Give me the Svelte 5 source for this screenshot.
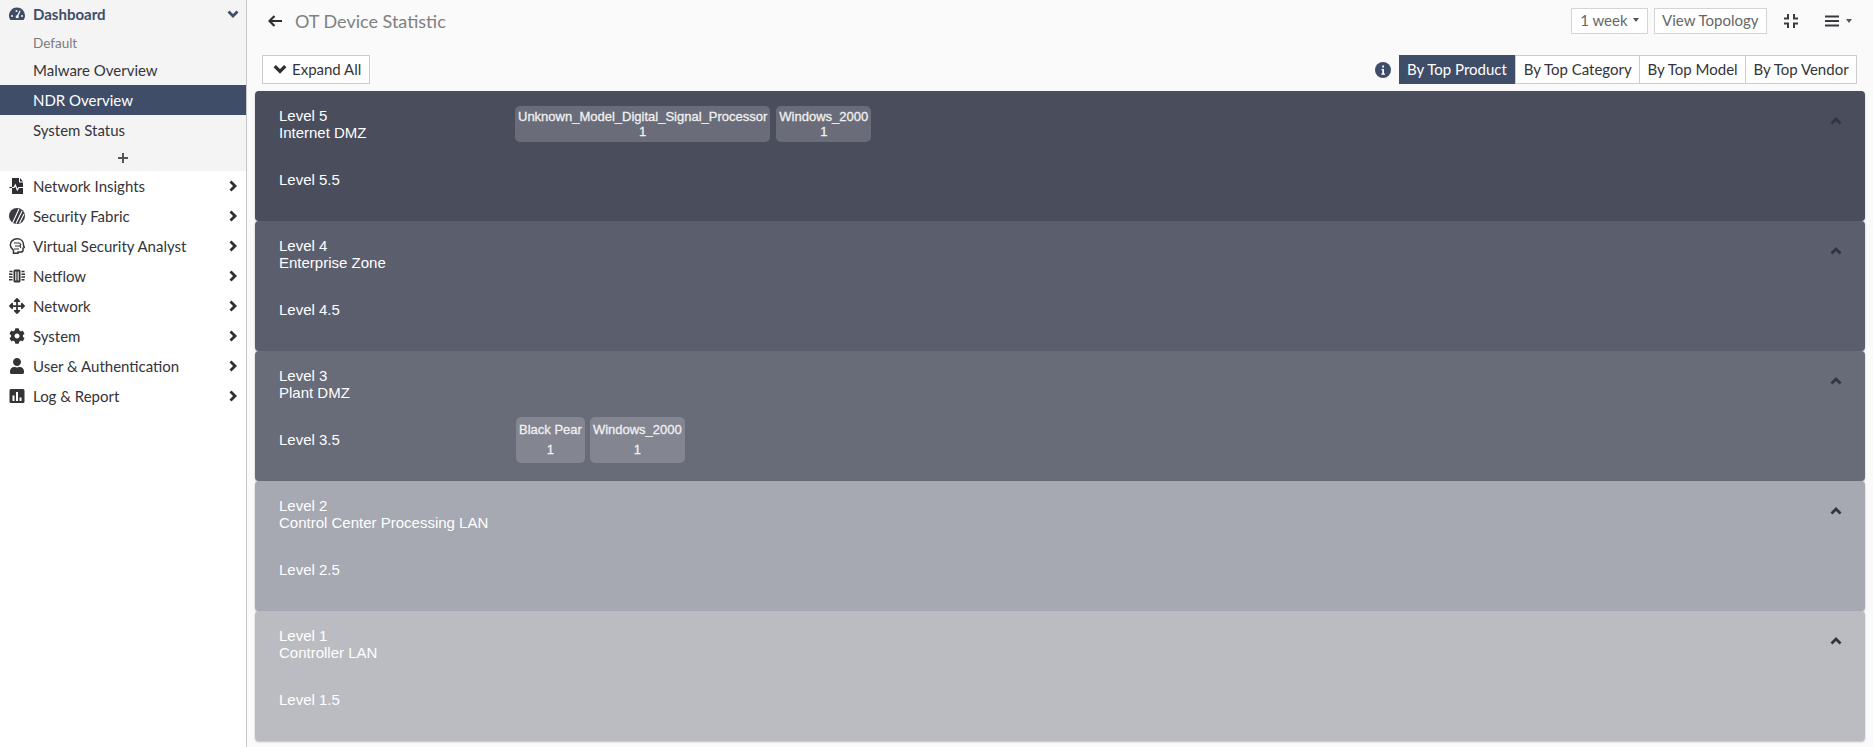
<script>
  const sub = [
    { label: 'Default', cls: 'muted' },
    { label: 'Malware Overview', cls: '' },
    { label: 'NDR Overview', cls: 'active' },
    { label: 'System Status', cls: '' }
  ];
  const nav = [
    { label: 'Network Insights', icon: 'insights' },
    { label: 'Security Fabric', icon: 'fabric' },
    { label: 'Virtual Security Analyst', icon: 'analyst' },
    { label: 'Netflow', icon: 'netflow' },
    { label: 'Network', icon: 'network' },
    { label: 'System', icon: 'system' },
    { label: 'User & Authentication', icon: 'user' },
    { label: 'Log & Report', icon: 'log' }
  ];
  const tabs = ['By Top Product', 'By Top Category', 'By Top Model', 'By Top Vendor'];
  const levels = [
    { cls: 'l5', name: 'Level 5', zone: 'Internet DMZ', sub: 'Level 5.5', top: [['Unknown_Model_Digital_Signal_Processor', 1], ['Windows_2000', 1]], bottom: [] },
    { cls: 'l4', name: 'Level 4', zone: 'Enterprise Zone', sub: 'Level 4.5', top: [], bottom: [] },
    { cls: 'l3', name: 'Level 3', zone: 'Plant DMZ', sub: 'Level 3.5', top: [], bottom: [['Black Pear', 1], ['Windows_2000', 1]] },
    { cls: 'l2', name: 'Level 2', zone: 'Control Center Processing LAN', sub: 'Level 2.5', top: [], bottom: [] },
    { cls: 'l1', name: 'Level 1', zone: 'Controller LAN', sub: 'Level 1.5', top: [], bottom: [] }
  ];
</script>

{#snippet icon(name)}
  {#if name === 'insights'}
    <svg class="ico" viewBox="0 0 16 16"><path d="M3 0h7v4.500h4V16H3z M11 0l3 3.500h-3z" fill="#2f2f33"/><path d="M3 9.500h2l1.300-2.500 2 5 1.500-2.500H14" fill="none" stroke="#fff" stroke-width="1.200"/><path d="M0.500 9.500H3" stroke="#2f2f33" stroke-width="1.200"/></svg>
  {:else if name === 'fabric'}
    <svg class="ico" viewBox="0 0 16 16"><circle cx="8" cy="8" r="8" fill="#3a3a3f"/><path d="M3.500 15L10 1M7 15.500L13 3M10.500 15L15 6" stroke="#fff" stroke-width="1.100" fill="none"/></svg>
  {:else if name === 'analyst'}
    <svg class="ico" viewBox="0 0 16 16" fill="none" stroke="#333338" stroke-width="1.500"><path d="M8 .8c3.900 0 6.500 2.600 6.500 6 0 1 .3 1.700.8 2.600l-1.300.6v2.300c0 1.200-.9 1.800-2.500 1.800H9v1.200H4.500v-3C2.500 10.500 1.300 8.800 1.300 7 1.300 3.500 4.300.8 8 .8z"/><path d="M5 5h5.500M6 8h5M5 11h5M10.500 5l1.200 1.500L11 8l.8 2" stroke-width="1.200"/></svg>
  {:else if name === 'netflow'}
    <svg class="ico" viewBox="0 0 16 16"><rect x="4.500" y="1.500" width="7" height="13" rx="1.500" fill="#333338"/><path d="M0.500 3.500h3M0 6.200h3.500M0 9h3.500M0 11.800h3.500M12.500 3.500h3M12.500 6.200h3.500M12.500 9h3.500M12.500 11.800h3" stroke="#333338" stroke-width="1.400" fill="none"/><path d="M6.500 3.500v9M8 3.500v9M9.500 3.500v9" stroke="#fff" stroke-width=".7"/></svg>
  {:else if name === 'network'}
    <svg class="ico" viewBox="0 0 512 512"><path fill="#333338" d="M352.201 425.775l-79.196 79.196c-9.373 9.373-24.568 9.373-33.941 0l-79.196-79.196c-15.119-15.119-4.411-40.971 16.971-40.970h51.162V284H127.196v51.162c0 21.382-25.851 32.090-40.971 16.971L7.029 272.937c-9.373-9.373-9.373-24.569 0-33.941L86.225 159.800c15.119-15.119 40.971-4.411 40.971 16.971V228H228V127.196h-51.230c-21.382 0-32.090-25.851-16.971-40.971l79.196-79.196c9.373-9.373 24.568-9.373 33.941 0l79.196 79.196c15.119 15.119 4.411 40.971-16.971 40.971h-51.162V228h100.804v-51.162c0-21.382 25.851-32.090 40.970-16.971l79.196 79.196c9.373 9.373 9.373 24.569 0 33.941L425.773 352.200c-15.119 15.119-40.971 4.411-40.970-16.971V284H284v100.804h51.230c21.382 0 32.090 25.851 16.971 40.971z"/></svg>
  {:else if name === 'system'}
    <svg class="ico" viewBox="0 0 512 512"><path fill="#333338" d="M487.4 315.7l-42.6-24.6c4.3-23.2 4.3-47 0-70.2l42.6-24.6c4.900-2.800 7.100-8.600 5.500-14-11.100-35.600-30-67.800-54.700-94.600-3.800-4.100-10-5.100-14.800-2.300L380.800 110c-17.900-15.400-38.500-27.300-60.800-35.100V25.800c0-5.600-3.900-10.500-9.400-11.700-36.700-8.200-74.300-7.800-109.200 0-5.500 1.200-9.400 6.100-9.400 11.700V75c-22.200 7.900-42.800 19.800-60.800 35.100L88.700 85.500c-4.900-2.800-11-1.900-14.800 2.300-24.700 26.700-43.600 58.900-54.700 94.600-1.700 5.400.6 11.200 5.500 14L67.300 221c-4.300 23.200-4.300 47 0 70.200l-42.6 24.600c-4.900 2.800-7.100 8.600-5.500 14 11.100 35.600 30 67.800 54.700 94.600 3.800 4.100 10 5.100 14.800 2.300l42.600-24.600c17.900 15.400 38.500 27.300 60.800 35.100v49.200c0 5.600 3.900 10.500 9.400 11.700 36.700 8.200 74.300 7.800 109.200 0 5.500-1.200 9.400-6.100 9.400-11.700v-49.200c22.200-7.900 42.800-19.800 60.800-35.100l42.600 24.600c4.900 2.800 11 1.900 14.800-2.300 24.700-26.700 43.600-58.900 54.700-94.600 1.500-5.500-.7-11.300-5.600-14.100zM256 336c-44.100 0-80-35.900-80-80s35.900-80 80-80 80 35.900 80 80-35.900 80-80 80z"/></svg>
  {:else if name === 'user'}
    <svg class="ico" viewBox="0 0 448 512"><path fill="#333338" d="M224 256c70.700 0 128-57.300 128-128S294.700 0 224 0 96 57.300 96 128s57.300 128 128 128zm89.600 32h-16.700c-22.200 10.200-46.900 16-72.900 16s-50.600-5.800-72.900-16h-16.700C60.200 288 0 348.200 0 422.400V464c0 26.500 21.500 48 48 48h352c26.500 0 48-21.500 48-48v-41.600c0-74.200-60.200-134.400-134.400-134.400z"/></svg>
  {:else if name === 'log'}
    <svg class="ico" viewBox="0 0 16 16"><path fill-rule="evenodd" fill="#333338" d="M2 1h12a1.500 1.500 0 0 1 1.500 1.500v11A1.500 1.500 0 0 1 14 15H2a1.500 1.500 0 0 1-1.500-1.500v-11A1.500 1.500 0 0 1 2 1zm1.500 6.500v5.500h2V7.500zm3.500-3.500v9h2V4zm3.500 5.500v3.500h2V9.500z"/></svg>
  {/if}
{/snippet}

{#snippet chevron(dir, cls)}
  <svg class={cls} viewBox="0 0 12 12" fill="none" stroke="currentColor" stroke-width="2.800">
    {#if dir === 'right'}<path d="M3.500 1.500L8 6l-4.500 4.500"/>
    {:else if dir === 'down'}<path d="M1.500 3.500L6 8l4.500-4.500"/>
    {:else}<path d="M1.500 8.500L6 4l4.500 4.500"/>{/if}
  </svg>
{/snippet}

<div class="page">
  <aside class="side">
    <section class="open">
      <div class="row head">
        <svg class="ico" viewBox="0 0 16 16"><path fill="#3f4d68" fill-rule="evenodd" d="M8 1.500a8 8 0 0 1 8 8c0 1.700-.5 3.300-1.400 4.500H1.400A8 8 0 0 1 8 1.500zM3 9a1 1 0 1 0 0 2 1 1 0 0 0 0-2zm10 0a1 1 0 1 0 0 2 1 1 0 0 0 0-2zM7.500 4a1 1 0 1 0 0 2 1 1 0 0 0 0-2zm3 .5L8.200 9.200a1.500 1.500 0 1 0 1.300.7l2-4.800z"/></svg>
        <span class="txt strong">Dashboard</span>
        {@render chevron('down', 'chev navy')}
      </div>
      {#each sub as s}
        <div class="row subrow {s.cls}"><span class="txt">{s.label}</span></div>
      {/each}
      <div class="plus">
        <svg viewBox="0 0 10 10" width="10" height="10"><path d="M5 0v10M0 5h10" stroke="#555" stroke-width="2"/></svg>
      </div>
    </section>
    {#each nav as n}
      <div class="row">
        {@render icon(n.icon)}
        <span class="txt">{n.label}</span>
        {@render chevron('right', 'chev')}
      </div>
    {/each}
  </aside>

  <main class="main">
    <div class="top">
      <svg class="back" viewBox="0 0 14 12" fill="none" stroke="#2f2f33" stroke-width="2.200"><path d="M14 6H2M6.500 1L1.500 6l5 5"/></svg>
      <h1>OT Device Statistic</h1>
      <div class="tools">
        <button class="btn week">1 week <i class="caret"></i></button>
        <button class="btn">View Topology</button>
        <svg class="compress" viewBox="0 0 14 14" fill="none" stroke="#3a3a3f" stroke-width="2"><path d="M4 0v4.500H0M10 0v4.500h4M4 14V9.500H0M10 14V9.500h4"/></svg>
        <span class="menu">
          <svg viewBox="0 0 14 12" width="14" height="12"><path d="M0 1.500h14M0 6h14M0 10.500h14" stroke="#3a3a3f" stroke-width="2"/></svg>
          <i class="caret"></i>
        </span>
      </div>
    </div>

    <div class="bar">
      <button class="expand">
        {@render chevron('down', 'chev-sm')}
        Expand All
      </button>
      <div class="right">
        <svg class="info" viewBox="0 0 16 16"><circle cx="8" cy="8" r="8" fill="#3f4d68"/><path d="M6.500 7h2.500v4.500h1v1.200H6.300v-1.200h1V8.200h-.8zM7.200 3.500h1.800v2H7.200z" fill="#fff"/></svg>
        <div class="tabs">
          {#each tabs as t, i}
            <button class="tab" class:on={i === 0}>{t}</button>
          {/each}
        </div>
      </div>
    </div>

    <div class="panels">
      {#each levels as l}
        <article class="panel {l.cls}">
          <div class="rows">
            <div class="lvl r1">
              <div class="label">{l.name}<br />{l.zone}</div>
              {#each l.top as c}
                <div class="chip">{c[0]}<br />{c[1]}</div>
              {/each}
            </div>
            <div class="lvl r2">
              <div class="label">{l.sub}</div>
              {#each l.bottom as c}
                <div class="chip">{c[0]}<br />{c[1]}</div>
              {/each}
            </div>
          </div>
          {@render chevron('up', 'chev-up')}
        </article>
      {/each}
    </div>
  </main>
</div>

<style>
  :global(body) {
    margin: 0;
    background: #fafafa;
    overflow: hidden;
  }
  .page {
    display: flex;
    width: 1873px;
    height: 747px;
    font-family: Lato, "Liberation Sans", sans-serif;
    font-size: 15px;
    color: #34343a;
  }
  .side {
    width: 246px;
    flex: none;
    background: #fff;
    border-right: 1px solid #c8c8c8;
  }
  .open {
    background: #f4f4f4;
    height: 171px;
  }
  .row {
    display: flex;
    align-items: center;
    height: 30px;
    padding: 0 7px 0 9px;
  }
  .head {
    height: 28px;
  }
  .subrow {
    padding-left: 33px;
  }
  .subrow.muted {
    height: 27px;
    padding-top: 2px;
    box-sizing: border-box;
    color: #7b7b7b;
    font-size: 13.500px;
  }
  .subrow.active {
    background: #3f4d68;
    color: #fff;
  }
  .plus {
    display: flex;
    justify-content: center;
    align-items: center;
    height: 26px;
  }
  .ico {
    width: 16px;
    height: 16px;
    flex: none;
    margin-right: 8px;
  }
  .txt {
    flex: 1;
    white-space: nowrap;
  }
  .strong {
    color: #3f4d68;
    font-weight: 700;
  }
  .chev {
    width: 12px;
    height: 12px;
    color: #2f2f33;
  }
  .navy {
    color: #3f4d68;
  }
  .main {
    flex: 1;
    min-width: 0;
    padding: 0 8px;
  }
  .top {
    display: flex;
    align-items: center;
    height: 41px;
    padding-left: 13px;
  }
  .back {
    width: 14px;
    height: 12px;
    margin-right: 13px;
  }
  h1 {
    margin: 0;
    font-size: 18px;
    font-weight: 400;
    color: #808080;
  }
  .tools {
    margin-left: auto;
    display: flex;
    align-items: center;
  }
  button {
    font-family: inherit;
    font-size: 15px;
    cursor: pointer;
  }
  .btn {
    height: 26px;
    padding: 0 7.500px 2px;
    margin-left: 6px;
    background: #fff;
    border: 1px solid #d5d5d5;
    color: #666;
    display: flex;
    align-items: center;
    gap: 4px;
    white-space: nowrap;
  }
  .week {
    padding: 0 8px 2px;
    gap: 5px;
  }
  .caret {
    display: inline-block;
    border-left: 3.500px solid transparent;
    border-right: 3.500px solid transparent;
    border-top: 4px solid #555;
  }
  .compress {
    width: 14px;
    height: 14px;
    margin-left: 17px;
  }
  .menu {
    display: flex;
    align-items: center;
    gap: 7px;
    margin-left: 27px;
    margin-right: 13px;
  }
  .bar {
    display: flex;
    align-items: center;
    justify-content: space-between;
    height: 29px;
    margin-top: 14px;
    margin-bottom: 7px;
    padding-left: 7px;
  }
  .expand {
    display: flex;
    align-items: center;
    gap: 5px;
    height: 29px;
    padding: 0 8px 2px 10px;
    background: #fff;
    border: 1px solid #ccc;
    color: #34343a;
  }
  .chev-sm {
    width: 14px;
    height: 14px;
    color: #2f2f33;
  }
  .right {
    display: flex;
    align-items: center;
    margin-right: 8px;
  }
  .info {
    width: 16px;
    height: 16px;
    margin-right: 8px;
  }
  .tabs {
    display: flex;
    height: 29px;
    border: 1px solid #ccc;
    box-sizing: border-box;
    background: #fff;
  }
  .tab {
    border: none;
    border-left: 1px solid #ccc;
    background: #fff;
    color: #34343a;
    padding: 0 7.400px 2px;
    white-space: nowrap;
  }
  .tab:first-child {
    border-left: none;
  }
  .tab.on {
    background: #3f4d68;
    color: #fff;
    margin: -1px 0 -1px -1px;
    padding: 0 8.400px 2px;
  }
  .panel {
    display: flex;
    height: 130px;
    box-sizing: border-box;
    padding: 15px 23px 0 24px;
    border-radius: 4px;
    box-shadow: 0 1px 2px rgba(0, 0, 0, 0.25);
    font-family: "Liberation Sans", Arial, sans-serif;
    color: #fff;
  }
  .rows {
    flex: 1;
  }
  .lvl {
    display: flex;
    align-items: center;
    gap: 6px;
  }
  .r1 {
    height: 36px;
    margin-bottom: 15px;
  }
  .r2 {
    height: 46px;
    gap: 5px;
  }
  .label {
    width: 231px;
    flex: none;
    font-size: 15px;
    line-height: 17px;
  }
  .r2 .label {
    width: 232px;
    padding-bottom: 2px;
  }
  .chip {
    background: rgba(255, 255, 255, 0.18);
    border-radius: 5px;
    padding: 3px;
    text-align: center;
    font-size: 13px;
    line-height: 15px;
    color: #f0f0f0;
    -webkit-text-stroke: 0.3px #f0f0f0;
    white-space: nowrap;
  }
  .r1 .label + .chip {
    margin-left: -1px;
  }
  .r2 .chip {
    line-height: 20px;
  }
  .chev-up {
    width: 12px;
    height: 12px;
    margin-top: 9px;
    color: #33343f;
  }
  .l5 { background: #4a4d5c; }
  .l4 { background: #5b5e6d; }
  .l3 { background: #686b78; }
  .l2 { background: #a6a8b2; }
  .l1 { background: #bbbcc2; }
</style>
